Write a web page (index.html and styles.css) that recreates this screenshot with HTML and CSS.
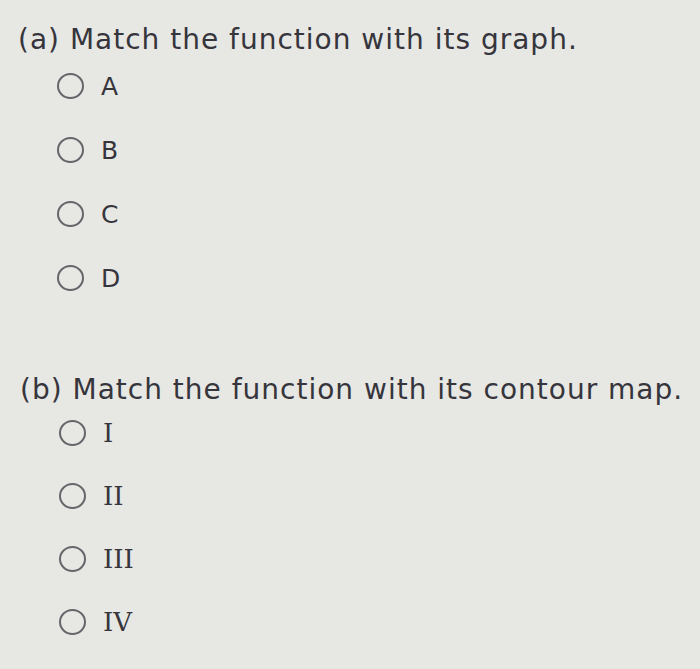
FILE: index.html
```html
<!DOCTYPE html>
<html>
<head>
<meta charset="utf-8">
<link rel="stylesheet" href="styles.css">
</head>
<body>
<div class="page">
  <section class="part part-a">
    <h2 class="question">(a) Match the function with its graph.</h2>
    <ul class="options">
      <li class="option"><span class="radio"></span><span class="label">A</span></li>
      <li class="option"><span class="radio"></span><span class="label">B</span></li>
      <li class="option"><span class="radio"></span><span class="label">C</span></li>
      <li class="option"><span class="radio"></span><span class="label">D</span></li>
    </ul>
  </section>
  <section class="part part-b">
    <h2 class="question">(b) Match the function with its contour map.</h2>
    <ul class="options roman">
      <li class="option"><span class="radio"></span><span class="label">I</span></li>
      <li class="option"><span class="radio"></span><span class="label">II</span></li>
      <li class="option"><span class="radio"></span><span class="label">III</span></li>
      <li class="option"><span class="radio"></span><span class="label">IV</span></li>
    </ul>
  </section>
</div>
</body>
</html>
```

FILE: styles.css
```css
html, body {
  margin: 0;
  padding: 0;
  background: #e7e7e4;
}
.page {
  width: 700px;
  height: 669px;
  overflow: hidden;
  font-family: "DejaVu Sans", Verdana, sans-serif;
  color: #36353c;
  padding: 18px 0 0 18px;
  box-sizing: border-box;
}
.question {
  margin: 0 0 10px;
  font-weight: normal;
  font-size: 28px;
  line-height: 44px;
  letter-spacing: 1px;
}
.options {
  list-style: none;
  margin: 0;
  padding: 0 0 0 39px;
  display: flex;
  flex-direction: column;
  gap: 36px;
}
.option {
  display: flex;
  align-items: center;
  height: 28px;
  gap: 17px;
}
.radio {
  width: 27px;
  height: 26px;
  border: 2px solid #66656a;
  border-radius: 50%;
  box-sizing: border-box;
}
.label {
  font-size: 25px;
}
.part-b {
  margin-top: 76px;
  padding-left: 2px;
}
.part-b .question {
  margin-bottom: 7px;
}
.roman {
  gap: 35px;
}
.roman .label {
  font-family: "DejaVu Serif", "Liberation Serif", serif;
  font-size: 26px;
}
```
